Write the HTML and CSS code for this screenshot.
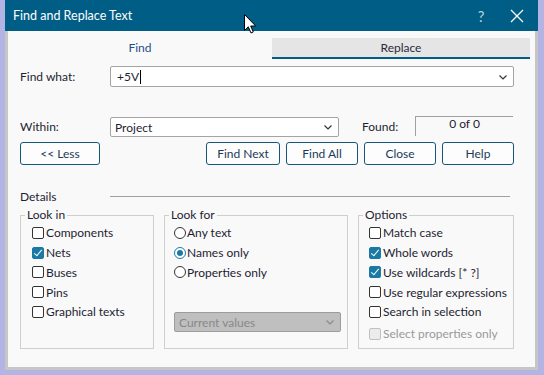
FILE: index.html
```html
<!DOCTYPE html>
<html lang="en">
<head>
    <meta charset="UTF-8">
    <title>Find and Replace Text</title>
    <link rel="stylesheet" href="styles.css">
</head>
<body>
    <div class="window">
        <div class="titlebar">
            <span class="title">Find and Replace Text</span>
            <span class="help-glyph">?</span>
            <span class="close-glyph">
                <svg width="14" height="14" viewBox="0 0 14 14"><path d="M1 1 L13 13 M13 1 L1 13" stroke="#fff" stroke-width="1.3" fill="none"/></svg>
            </span>
        </div>
        <div class="dialog">
            <div class="tabs">
                <div class="tab tab-find">Find</div>
                <div class="tab tab-replace">Replace</div>
            </div>

            <div class="content">
                <div class="row row-find">
                    <span class="lbl">Find what:</span>
                    <div class="combo combo-find">
                        <span class="value">+5V</span><span class="text-caret"></span>
                        <svg class="chevron" width="8" height="5" viewBox="0 0 8 5"><path d="M0.5 0.5 L4 4 L7.5 0.5" stroke="#333" stroke-width="1.2" fill="none"/></svg>
                    </div>
                </div>

                <div class="row row-within">
                    <span class="lbl">Within:</span>
                    <div class="combo combo-within">
                        <span class="value">Project</span>
                        <svg class="chevron" width="8" height="5" viewBox="0 0 8 5"><path d="M0.5 0.5 L4 4 L7.5 0.5" stroke="#333" stroke-width="1.2" fill="none"/></svg>
                    </div>
                    <span class="lbl-found">Found:</span>
                    <div class="found-box">0 of 0</div>
                </div>

                <div class="row row-buttons">
                    <button class="btn btn-less">&lt;&lt; Less</button>
                    <div class="spacer"></div>
                    <button class="btn btn-next">Find Next</button>
                    <button class="btn">Find All</button>
                    <button class="btn">Close</button>
                    <button class="btn">Help</button>
                </div>

                <div class="details">
                    <span class="details-title">Details</span>
                    <span class="rule"></span>
                </div>

                <div class="groups">
                    <fieldset class="group group-lookin">
                        <legend>Look in</legend>
                        <div class="item"><span class="check"></span>Components</div>
                        <div class="item"><span class="check checked"></span>Nets</div>
                        <div class="item"><span class="check"></span>Buses</div>
                        <div class="item"><span class="check"></span>Pins</div>
                        <div class="item"><span class="check"></span>Graphical texts</div>
                    </fieldset>

                    <fieldset class="group group-lookfor">
                        <legend>Look for</legend>
                        <div class="item"><span class="radio"></span>Any text</div>
                        <div class="item"><span class="radio selected"></span>Names only</div>
                        <div class="item"><span class="radio"></span>Properties only</div>
                        <div class="combo combo-disabled">
                            <span class="value">Current values</span>
                            <svg class="chevron" width="8" height="5" viewBox="0 0 8 5"><path d="M0.5 0.5 L4 4 L7.5 0.5" stroke="#8a8a8a" stroke-width="1.2" fill="none"/></svg>
                        </div>
                    </fieldset>

                    <fieldset class="group group-options">
                        <legend>Options</legend>
                        <div class="item"><span class="check"></span>Match case</div>
                        <div class="item"><span class="check checked"></span>Whole words</div>
                        <div class="item"><span class="check checked"></span>Use wildcards [* ?]</div>
                        <div class="item"><span class="check"></span>Use regular expressions</div>
                        <div class="item"><span class="check"></span>Search in selection</div>
                        <div class="item item-disabled"><span class="check"></span>Select properties only</div>
                    </fieldset>
                </div>
            </div>
        </div>
    </div>

    <!-- mouse pointer over the title bar -->
    <svg class="pointer" width="13" height="21" viewBox="0 0 13 21">
        <path d="M0.5 0.5 L0.5 16.5 L4.3 12.8 L7 19 L9.3 18 L6.7 12 L11.7 12 Z" fill="#fff" stroke="#000" stroke-width="1"/>
    </svg>
</body>
</html>
```

FILE: styles.css
```css
* {
    margin: 0;
    padding: 0;
    box-sizing: border-box;
}

body {
    font-family: 'Lato', 'Open Sans', sans-serif;
    font-size: 12px;
    color: #1e1e32;
    background: #b3b3e4;
    width: 544px;
    height: 375px;
    overflow: hidden;
    position: relative;
}

.window {
    margin-left: 5px;
    width: 533px;
}

/* title bar */
.titlebar {
    height: 31px;
    background: #005e86;
    color: #fff;
    display: flex;
    align-items: center;
    padding-left: 8px;
    font-size: 12.5px;
}

.title {
    flex: 1;
}

.help-glyph {
    color: #b9cfdc;
    font-size: 15px;
    width: 30px;
    text-align: center;
}

.close-glyph {
    width: 42px;
    display: flex;
    justify-content: center;
}

.dialog {
    background: #f9f9f9;
    border: 3px solid #c6c6c6;
    border-top: none;
    height: 339px;
}

/* tabs */
.tabs {
    display: flex;
    align-items: flex-end;
    height: 28px;
    padding-right: 5px;
}

.tab {
    text-align: center;
}

.tab-find {
    width: 264px;
    height: 26px;
    line-height: 33px;
    color: #1f4e8c;
    align-self: flex-start;
}

.tab-replace {
    width: 258px;
    height: 21px;
    line-height: 19px;
    background: #e5e5e5;
    border-bottom: 2px solid #005e86;
    color: #2a2a3e;
}

/* form */
.content {
    padding-left: 12px;
}

.row {
    display: flex;
    align-items: center;
}

.lbl {
    width: 90px;
}

.combo {
    position: relative;
    background: #fff;
    border: 1px solid #a4a4a4;
    border-radius: 2px;
    display: flex;
    align-items: center;
    padding-left: 6px;
}

.chevron {
    position: absolute;
    right: 6px;
    top: 50%;
    margin-top: -2px;
}

.row-find {
    margin-top: 7px;
}

.combo-find {
    width: 404px;
    height: 21px;
}

.text-caret {
    width: 1px;
    height: 14px;
    background: #000;
    margin-left: 1px;
}

.row-within {
    margin-top: 29px;
    height: 21px;
}

.combo-within {
    width: 229px;
    height: 20px;
    margin-top: 1px;
    padding-left: 4px;
}

.lbl-found {
    margin-left: 23px;
    width: 53px;
}

.found-box {
    width: 98px;
    height: 20px;
    border-top: 1px solid #a0a0a0;
    border-left: 1px solid #a0a0a0;
    text-align: center;
    line-height: 13px;
    align-self: flex-start;
}

.row-buttons {
    margin-top: 5px;
    width: 494px;
    gap: 6px;
}

.spacer {
    flex: 1;
}

.btn {
    font-family: inherit;
    font-size: inherit;
    color: #1c3a5a;
    background: #fdfdfd;
    border: 1px solid #14587a;
    border-radius: 3px;
    width: 72px;
    height: 23px;
}

.btn-less {
    width: 80px;
}

.btn-next {
    width: 74px;
}

.details {
    margin-top: 23px;
    height: 16px;
    display: flex;
    align-items: center;
}

.details-title {
    width: 90px;
}

.rule {
    width: 400px;
    height: 1px;
    background: #a0a0a0;
}

/* group boxes */
.groups {
    margin-top: 3px;
    display: flex;
    gap: 10px;
}

.group {
    --pad: 11px;
    border: 1px solid #cfcfcf;
    height: 142px;
    min-width: 0;
    padding-left: var(--pad);
}

.group legend {
    margin-left: calc(4px - var(--pad));
    padding: 0 2px;
    line-height: 16px;
}

.group-lookin {
    width: 134px;
}

.group-lookfor {
    --pad: 9px;
    width: 184px;
}

.group-options {
    --pad: 10px;
    width: 156px;
}

.item {
    height: 19.75px;
    display: flex;
    align-items: center;
    white-space: nowrap;
}

.check {
    width: 12px;
    height: 12px;
    border: 1px solid #333;
    border-radius: 2px;
    margin-right: 2px;
    background: #fff;
    position: relative;
}

.check.checked {
    background: #1b7aa5;
    border-color: #1b7aa5;
}

.check.checked::after {
    content: "";
    position: absolute;
    left: 3px;
    top: 0px;
    width: 3px;
    height: 7px;
    border-right: 1.5px solid #fff;
    border-bottom: 1.5px solid #fff;
    transform: rotate(40deg);
}

.radio {
    width: 12px;
    height: 12px;
    border: 1px solid #333;
    border-radius: 50%;
    margin-right: 1px;
    background: #fff;
    position: relative;
}

.radio.selected {
    border-color: #1b7aa5;
}

.radio.selected::after {
    content: "";
    position: absolute;
    left: 2px;
    top: 2px;
    width: 6px;
    height: 6px;
    border-radius: 50%;
    background: #1b7aa5;
}

.item-disabled {
    margin-top: 2px;
    color: #9a9a9a;
}

.item-disabled .check {
    border-color: #c0c0c0;
    background: #ececec;
}

.combo-disabled {
    margin-top: 30px;
    width: 167px;
    height: 20px;
    background: #bfbfbf;
    border-color: #9c9c9c;
    color: #888;
    padding-left: 4px;
}

.pointer {
    position: absolute;
    left: 244px;
    top: 14px;
}
```
